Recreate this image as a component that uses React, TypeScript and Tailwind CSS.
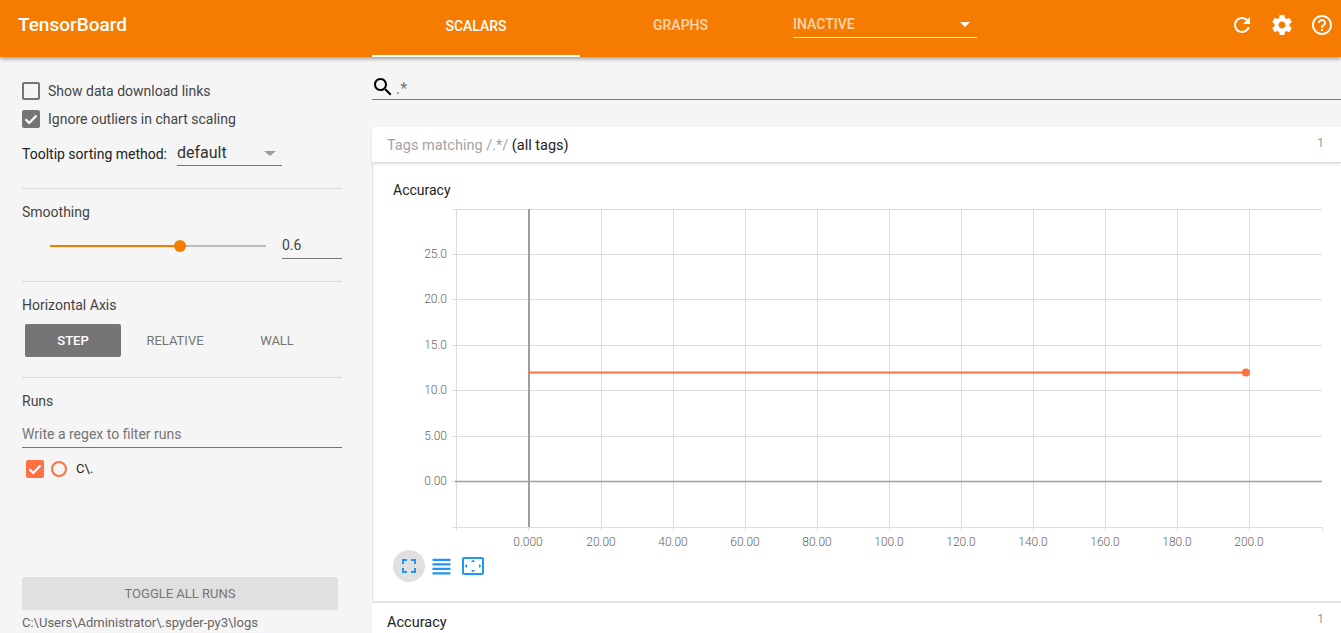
import type { ReactNode } from "react";

const FONT = "font-['Roboto',sans-serif]";

const GRID_X = [528, 601, 673, 745, 817, 889, 961, 1033, 1105, 1177, 1249];
const GRID_Y = [209, 254, 299, 345, 390, 436, 481, 527];
const X_LABELS = ["0.000", "20.00", "40.00", "60.00", "80.00", "100.0", "120.0", "140.0", "160.0", "180.0", "200.0"];
const Y_LABELS: [number, string][] = [
	[254, "25.0"],
	[299, "20.0"],
	[345, "15.0"],
	[390, "10.0"],
	[436, "5.00"],
	[481, "0.00"],
];

const ICONS = {
	refresh:
		"M17.65 6.35C16.2 4.9 14.21 4 12 4c-4.42 0-7.99 3.58-7.99 8s3.57 8 7.99 8c3.73 0 6.84-2.55 7.73-6h-2.08c-.82 2.33-3.04 4-5.65 4-3.31 0-6-2.69-6-6s2.69-6 6-6c1.66 0 3.14.69 4.22 1.78L13 11h7V4l-2.35 2.35z",
	settings:
		"M19.43 12.98c.04-.32.07-.64.07-.98s-.03-.66-.07-.98l2.11-1.65c.19-.15.24-.42.12-.64l-2-3.46c-.12-.22-.39-.3-.61-.22l-2.49 1c-.52-.4-1.08-.73-1.69-.98l-.38-2.65C14.46 2.18 14.25 2 14 2h-4c-.25 0-.46.18-.49.42l-.38 2.65c-.61.25-1.17.59-1.69.98l-2.49-1c-.23-.09-.49 0-.61.22l-2 3.46c-.13.22-.07.49.12.64l2.11 1.65c-.04.32-.07.65-.07.98s.03.66.07.98l-2.11 1.65c-.19.15-.24.42-.12.64l2 3.46c.12.22.39.3.61.22l2.49-1c.52.4 1.08.73 1.69.98l.38 2.65c.03.24.24.42.49.42h4c.25 0 .46-.18.49-.42l.38-2.65c.61-.25 1.17-.59 1.69-.98l2.49 1c.23.09.49 0 .61-.22l2-3.46c.12-.22.07-.49-.12-.64l-2.11-1.65zM12 15.5c-1.93 0-3.5-1.57-3.5-3.5s1.57-3.5 3.5-3.5 3.5 1.57 3.5 3.5-1.57 3.5-3.5 3.5z",
	help: "M11 18h2v-2h-2v2zm1-16C6.48 2 2 6.48 2 12s4.48 10 10 10 10-4.48 10-10S17.52 2 12 2zm0 18c-4.41 0-8-3.59-8-8s3.59-8 8-8 8 3.59 8 8-3.59 8-8 8zm0-14c-2.21 0-4 1.79-4 4h2c0-1.1.9-2 2-2s2 .9 2 2c0 2-3 1.75-3 5h2c0-2.25 3-2.5 3-5 0-2.21-1.79-4-4-4z",
	search:
		"M15.5 14h-.79l-.28-.27C15.41 12.59 16 11.11 16 9.5 16 5.91 13.09 3 9.5 3S3 5.91 3 9.5 5.91 16 9.5 16c1.61 0 3.09-.59 4.23-1.57l.27.28v.79l5 4.99L20.49 19l-4.99-5zm-6 0C7.01 14 5 11.99 5 9.5S7.01 5 9.5 5 14 7.01 14 9.5 11.99 14 9.5 14z",
	fullscreen:
		"M7 14H5v5h5v-2H7v-3zm-2-4h2V7h3V5H5v5zm12 7h-3v2h5v-5h-2v3zM14 5v2h3v3h2V5h-5z",
	lines: "M4 15h16v-2H4v2zm0 4h16v-2H4v2zm0-8h16V9H4v2zm0-6v2h16V5H4z",
	fit: "M12.01 5.5L10 8h4l-1.99-2.5zM18 10v4l2.5-1.99L18 10zM6 10l-2.5 2.01L6 14v-4zm8 6h-4l2.01 2.5L14 16zm7-13H3c-1.1 0-2 .9-2 2v14c0 1.1.9 2 2 2h18c1.1 0 2-.9 2-2V5c0-1.1-.9-2-2-2zm0 16.01H3V4.99h18v14.02z",
};

function Icon({ d, className }: { d: string; className?: string }) {
	return (
		<svg viewBox="0 0 24 24" fill="currentColor" className={className}>
			<path d={d} />
		</svg>
	);
}

function CheckBox({ checked, color }: { checked?: boolean; color?: "gray" | "run" }) {
	if (!checked) {
		return <span className="block w-[18px] h-[18px] rounded-[2px] border-2 border-[#757575] shrink-0" />;
	}
	return (
		<span
			className={
				color === "run"
					? "flex items-center justify-center w-[18px] h-[18px] rounded-[2px] bg-[#ff7043] shrink-0"
					: "flex items-center justify-center w-[18px] h-[18px] rounded-[2px] bg-[#757575] shrink-0"
			}
		>
			<svg viewBox="0 0 18 18" className="w-[18px] h-[18px]" fill="none" stroke="#fff" strokeWidth="2.2">
				<path d="M3.5 9.2 7.2 13l7.3-7.6" />
			</svg>
		</span>
	);
}

function Section({ children }: { children: ReactNode }) {
	return <div className="border-b border-[#d9d9d9]">{children}</div>;
}

function Header() {
	return (
		<header className="relative z-10 flex h-[57px] shrink-0 bg-[#f57c00] text-white shadow-[0_2px_4px_rgba(0,0,0,0.35)]">
			<div className="w-[372px] pl-[18px] pt-[12px] text-[19px] leading-[26px] font-medium">TensorBoard</div>
			<div className="flex h-[57px] w-[208px] items-center justify-center border-b-[2px] border-white text-[14px] font-medium pb-[3px]">
				SCALARS
			</div>
			<div className="flex h-[57px] w-[201px] items-center justify-center text-[14px] font-medium text-white/70 pb-[6px]">
				GRAPHS
			</div>
			<div className="ml-[12px] mt-[12px] flex h-[26px] w-[184px] items-start justify-between border-b border-white/90 text-[14px] font-medium text-white/70">
				<span className="leading-[24px]">INACTIVE</span>
				<span className="mt-[10px] mr-[7px] h-0 w-0 border-x-[5px] border-t-[5px] border-x-transparent border-t-white" />
			</div>
			<div className="ml-auto mr-[7px] flex gap-[16px] pt-[13px]">
				<Icon d={ICONS.refresh} className="w-6 h-6" />
				<Icon d={ICONS.settings} className="w-6 h-6" />
				<Icon d={ICONS.help} className="w-6 h-6" />
			</div>
		</header>
	);
}

function Sidebar() {
	return (
		<aside className="flex w-[372px] shrink-0 flex-col pl-[22px] pr-[30px] text-[14px] text-[#333]">
			<Section>
				<div className="h-[131px] pt-[25px]">
					<label className="flex h-[18px] items-center gap-[8px]">
						<CheckBox />
						<span className="text-[#444]">Show data download links</span>
					</label>
					<label className="mt-[10px] flex h-[18px] items-center gap-[8px]">
						<CheckBox checked />
						<span className="text-[#444]">Ignore outliers in chart scaling</span>
					</label>
					<div className="mt-[12px] flex items-start">
						<span className="mt-[6px] leading-[17px] text-[#222]">Tooltip sorting method:</span>
						<div className="ml-[10px] flex h-[26px] w-[105px] items-start justify-between border-b border-[#757575] text-[16px] leading-[26px] text-[#333]">
							<span>default</span>
							<span className="mt-[11px] mr-[6px] h-0 w-0 border-x-[6px] border-t-[5px] border-x-transparent border-t-[#9e9e9e]" />
						</div>
					</div>
				</div>
			</Section>
			<Section>
				<div className="h-[92px] pt-[14px]">
					<div className="leading-[18px] text-[#444]">Smoothing</div>
					<div className="mt-[11px] flex items-start">
						<div className="ml-[28px] mt-[8px] flex w-[216px] items-center">
							<span className="h-[2px] w-[130px] bg-[#f57c00]" />
							<span className="h-3 w-3 shrink-0 -translate-x-[6px] rounded-full bg-[#f57c00]" />
							<span className="-ml-[12px] h-[2px] flex-1 bg-[#bdbdbd]" />
						</div>
						<div className="ml-[16px] h-[27px] w-[60px] border-b border-[#757575] leading-[26px] text-[#444]">0.6</div>
					</div>
				</div>
			</Section>
			<Section>
				<div className="h-[95px] pt-[14px]">
					<div className="leading-[18px] text-[#444]">Horizontal Axis</div>
					<div className="mt-[10px] ml-[3px] flex text-[13px] font-normal text-[#757575]">
						<span className="flex h-[33px] w-[96px] items-center justify-center rounded-[2px] bg-[#757575] font-medium text-white">STEP</span>
						<span className="flex h-[33px] w-[108px] items-center justify-center">RELATIVE</span>
						<span className="flex h-[33px] w-[96px] items-center justify-center">WALL</span>
					</div>
				</div>
			</Section>
			<div className="flex flex-1 flex-col">
				<div className="mt-[14px] leading-[18px] text-[#444]">Runs</div>
				<div className="mt-[14px] h-[24px] border-b border-[#757575] leading-[20px] text-[#757575]">Write a regex to filter runs</div>
				<div className="mt-[12px] ml-[4px] flex h-[18px] items-center">
					<CheckBox checked color="run" />
					<span className="ml-[7px] h-4 w-4 rounded-full border-2 border-[#ff7043]" />
					<span className="ml-[9px] text-[13px] text-[#222]">C\.</span>
				</div>
				<button className="mt-[99px] flex h-[33px] w-[316px] items-center justify-center rounded-[2px] bg-[#e0e0e0] text-[13px] text-[#757575]">
					TOGGLE ALL RUNS
				</button>
				<div className="mt-[5px] text-[13px] leading-[16px] text-[#666]">C:\Users\Administrator\.spyder-py3\logs</div>
			</div>
		</aside>
	);
}

function Chart() {
	// svg origin sits at page x=373, y=203
	const ox = 373;
	const oy = 203;
	return (
		<svg width="968" height="345" className="block">
			<g stroke="#dcdcdc" strokeWidth="1">
				{GRID_X.map((x) => (
					<line key={x} x1={x - ox + 0.5} x2={x - ox + 0.5} y1={6} y2={328} />
				))}
				{GRID_Y.map((y) => (
					<line key={y} x1={452 - ox} x2={1322 - ox} y1={y - oy + 0.5} y2={y - oy + 0.5} />
				))}
				<line x1={456 - ox + 0.5} x2={456 - ox + 0.5} y1={6} y2={328} />
				<line x1={1322 - ox + 0.5} x2={1322 - ox + 0.5} y1={324} y2={328} />
			</g>
			<line x1={529 - ox} x2={529 - ox} y1={6} y2={324} stroke="#9e9e9e" strokeWidth="2" />
			<line x1={455 - ox} x2={1322 - ox} y1={481 - oy + 0.5} y2={481 - oy + 0.5} stroke="#9e9e9e" strokeWidth="1.5" />
			<line x1={528 - ox} x2={1246 - ox} y1={372.5 - oy} y2={372.5 - oy} stroke="#ff7043" strokeWidth="2" />
			<circle cx={1246 - ox} cy={372.5 - oy} r="4" fill="#ff7043" />
			<g fontSize="12" fontWeight="300" fill="#666" fontFamily="Roboto, sans-serif">
				{Y_LABELS.map(([y, label]) => (
					<text key={label} x={447 - ox} y={y - oy + 4} textAnchor="end">
						{label}
					</text>
				))}
				{X_LABELS.map((label, i) => (
					<text key={label} x={GRID_X[i] - ox} y={343} textAnchor="middle">
						{label}
					</text>
				))}
			</g>
		</svg>
	);
}

function Main() {
	return (
		<main className="flex min-w-0 flex-1 flex-col">
			<div className="mt-[16px] flex h-[27px] shrink-0 items-start border-b border-[#757575]">
				<Icon d={ICONS.search} className="w-6 h-6 mt-[2px] text-black -ml-[1px]" />
				<span className="ml-[1px] mt-[6px] text-[16px] leading-[20px] text-[#757575]">.*</span>
			</div>
			<section className="mt-[27px] flex h-[35px] shrink-0 items-start justify-between bg-white pl-[15px] pr-[17px] shadow-[0_2px_3px_rgba(0,0,0,0.12)] relative">
				<div className="mt-[9px] text-[14.5px] leading-[20px]">
					<span className="text-[#a3a3a3]">Tags matching /.*/ </span>
					<span className="text-[#222]">(all tags)</span>
				</div>
				<span className="mt-[7px] text-[12px] text-[#999]">1</span>
			</section>
			<section className="mt-[1px] h-[440px] shrink-0 border-x border-b-2 border-[#e2e2e2] border-r-0 bg-white">
				<div className="pl-[20px] pt-[19px] text-[14px] leading-[17px] text-[#222]">Accuracy</div>
				<div className="mt-[4px]">
					<Chart />
				</div>
				<div className="ml-[20px] mt-[2px] flex items-center">
					<span className="flex h-8 w-8 items-center justify-center rounded-full bg-[#e0e0e0]">
						<Icon d={ICONS.fullscreen} className="w-6 h-6 text-[#2196f3]" />
					</span>
					<Icon d={ICONS.lines} className="ml-[3px] w-[27px] h-[27px] text-[#2196f3]" />
					<Icon d={ICONS.fit} className="ml-[6px] w-6 h-6 text-[#2196f3]" />
				</div>
			</section>
			<section className="flex flex-1 items-start justify-between bg-white pl-[15px] pr-[17px]">
				<span className="mt-[10px] text-[14.5px] leading-[20px] text-[#222]">Accuracy</span>
				<span className="mt-[7px] text-[12px] text-[#999]">1</span>
			</section>
		</main>
	);
}

export default function App() {
	return (
		<div className={`${FONT} flex h-[633px] w-[1341px] flex-col overflow-hidden bg-[#f5f5f5]`}>
			<Header />
			<div className="flex flex-1 overflow-hidden">
				<Sidebar />
				<Main />
			</div>
		</div>
	);
}
